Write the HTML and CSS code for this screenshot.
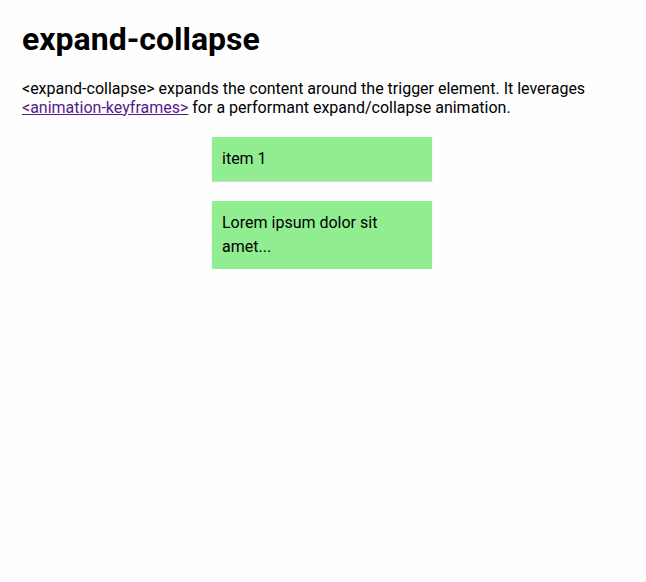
FILE: index.html
```html
<!DOCTYPE html>
<html>
<head>
<meta charset="utf-8">
<link rel="stylesheet" href="styles.css">
</head>
<body>
<h1 class="title">expand-collapse</h1>
<p class="intro">&lt;expand-collapse&gt; expands the content around the trigger element. It leverages <a href="#" class="link">&lt;animation-keyframes&gt;</a> for a performant expand/collapse animation.</p>
<div class="list">
  <div class="item">item 1</div>
  <div class="item">Lorem ipsum dolor sit amet...</div>
</div>
</body>
</html>
```
FILE: styles.css
```css
html, body {
  margin: 0;
  background: #fefefe;
}
body {
  padding: 0 24px 0 22px;
  font-family: Roboto, "Liberation Sans", sans-serif;
  font-size: 16px;
  color: #000;
}
.title {
  font-size: 32px;
  font-weight: 700;
  margin: 21px 0 0;
  line-height: 37px;
}
.intro {
  margin: 22px 0 0;
  line-height: 18.75px;
}
.link {
  color: #551a8b;
}
.list {
  display: flex;
  flex-direction: column;
  align-items: center;
  gap: 20px;
  margin-top: 19px;
}
.item {
  width: 200px;
  padding: 10px;
  line-height: 24px;
  background: #90ee90;
  box-shadow: 0 1px 1px rgba(0,0,0,0.15);
}
```
